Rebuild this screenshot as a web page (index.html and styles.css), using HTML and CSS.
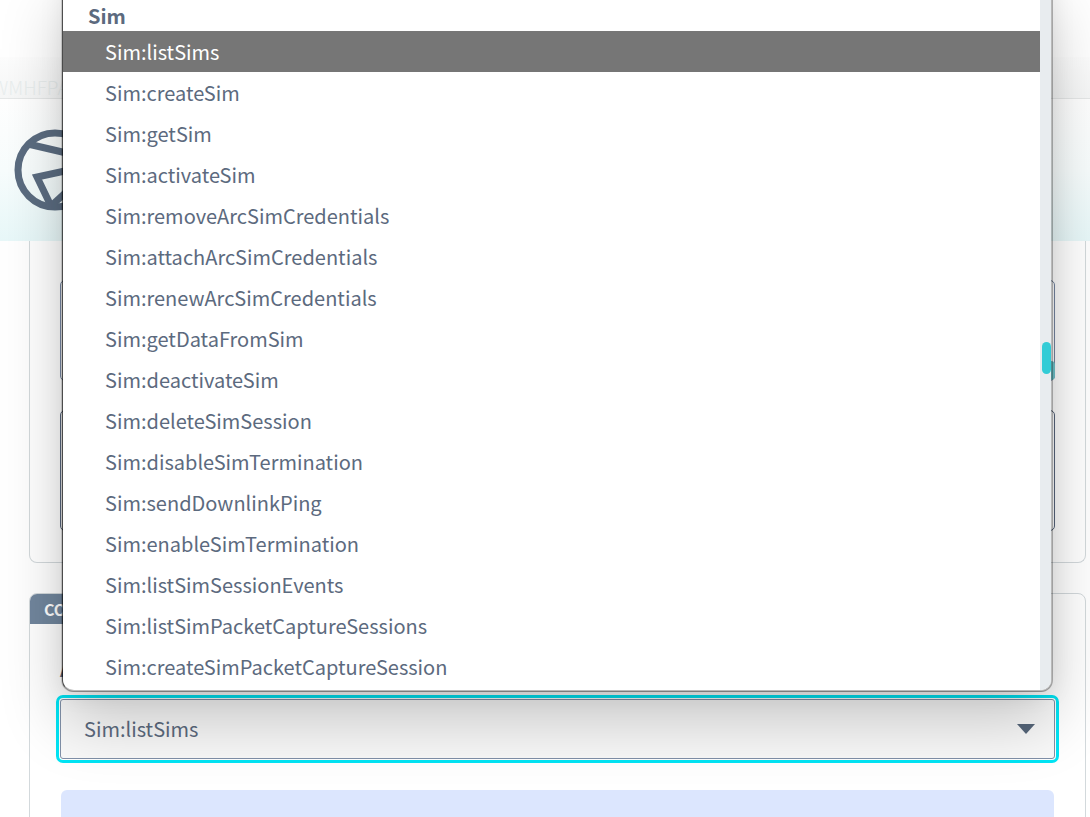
FILE: index.html
```html
<!DOCTYPE html>
<html lang="en">
<head>
    <meta charset="UTF-8">
    <meta name="viewport" content="width=device-width, initial-scale=1.0">
    <title>Sim:listSims</title>
    <link rel="stylesheet" href="styles.css">
</head>
<body>
    <div class="topbar">
        <div class="topbar-row">WMHFPA</div>
    </div>
    <header class="hero">
        <svg class="logo" viewBox="0 0 82 82" aria-hidden="true">
            <g fill="none" stroke="#5b6c80" stroke-width="7">
                <circle cx="41" cy="41" r="37"/>
                <path d="M14 15 L74 29"/>
                <path d="M74 37 L23 48 L37 77"/>
                <path d="M37 77 L62 54"/>
            </g>
        </svg>
    </header>
    <main>
        <section class="panel panel-first">
            <div class="text-wrap">
                <textarea class="field field-text" aria-label="Request"></textarea>
                <span class="grip"></span>
            </div>
            <div class="field field-box"></div>
        </section>

        <section class="panel">
            <h2 class="panel-tag">CODE</h2>
            <div class="panel-body">
                <label class="field-label" for="command">API</label>
                <div class="select-wrap">
                    <select id="command" class="select">
                        <option>Sim:listSims</option>
                    </select>
                    <svg class="caret" viewBox="0 0 18 10" aria-hidden="true"><path d="M0 0 H18 L9 10 Z" fill="#56667a"/></svg>
                    <div class="dropdown">
                        <div class="group-label" id="group-sim">Sim</div>
                        <ul class="options" role="listbox" aria-labelledby="group-sim">
                            <li class="option selected" role="option" aria-selected="true">Sim:listSims</li>
                            <li class="option" role="option">Sim:createSim</li>
                            <li class="option" role="option">Sim:getSim</li>
                            <li class="option" role="option">Sim:activateSim</li>
                            <li class="option" role="option">Sim:removeArcSimCredentials</li>
                            <li class="option" role="option">Sim:attachArcSimCredentials</li>
                            <li class="option" role="option">Sim:renewArcSimCredentials</li>
                            <li class="option" role="option">Sim:getDataFromSim</li>
                            <li class="option" role="option">Sim:deactivateSim</li>
                            <li class="option" role="option">Sim:deleteSimSession</li>
                            <li class="option" role="option">Sim:disableSimTermination</li>
                            <li class="option" role="option">Sim:sendDownlinkPing</li>
                            <li class="option" role="option">Sim:enableSimTermination</li>
                            <li class="option" role="option">Sim:listSimSessionEvents</li>
                            <li class="option" role="option">Sim:listSimPacketCaptureSessions</li>
                            <li class="option" role="option">Sim:createSimPacketCaptureSession</li>
                        </ul>
                        <div class="scroll-track"><div class="scroll-thumb"></div></div>
                    </div>
                </div>
                <div class="notice"></div>
            </div>
        </section>
    </main>
</body>
</html>
```

FILE: styles.css
```css
* {
    box-sizing: border-box;
}

html {
    overflow: hidden;
}

body {
    margin: 0;
    background: #fff;
    color: #5c6a7e;
    font-family: "Noto Sans CJK JP", "Noto Sans", sans-serif;
    font-size: 20px;
}

.topbar {
    padding-top: 57px;
    border-bottom: 1px solid #e6e8e8;
}

.topbar-row {
    height: 41px;
    margin-left: -8px;
    background: linear-gradient(#fdfdfd, #f6f7f7);
    color: #e9eeee;
    font-size: 19px;
    font-weight: 300;
    line-height: 60px;
    overflow: hidden;
}

.hero {
    height: 142px;
    padding: 30px 14px;
    background: linear-gradient(#fff, #f8fdfd 50%, #e8f8f9);
}

.logo {
    display: block;
    width: 82px;
    height: 82px;
}

main {
    padding: 0 4px 0 29px;
}

.panel {
    margin-bottom: 30px;
    border: 1px solid #d3d9dc;
    border-radius: 8px;
}

.panel-first {
    padding: 39px 30px 31px;
    border-top: 0;
    border-radius: 0 0 8px 8px;
}

.text-wrap {
    position: relative;
    margin-bottom: 29px;
}

.field {
    display: block;
    width: 100%;
    border: 1px solid #7485a0;
    border-radius: 5px;
    background: #fff;
}

.field-text {
    height: 101px;
    resize: none;
}

.grip {
    position: absolute;
    right: 0;
    bottom: 1px;
    width: 18px;
    height: 19px;
    border-radius: 4px;
    background: #6fc3ca;
}

.field-box {
    height: 121px;
    border-color: #56647a;
}

.panel-tag {
    width: 80px;
    margin: 0;
    padding-left: 14px;
    border-radius: 7px 0 0 0;
    background: #71869d;
    color: #fff;
    font-size: 16px;
    line-height: 30px;
}

.panel-body {
    padding: 30px;
}

.field-label {
    display: block;
    height: 45px;
    font-weight: bold;
    line-height: 30px;
}

.select-wrap {
    position: relative;
}

.select {
    display: block;
    width: 100%;
    height: 60px;
    padding: 0 60px 2px 23px;
    border: 1px solid #8090a8;
    border-radius: 3px;
    outline: 3px solid #00e5f5;
    outline-offset: 1px;
    appearance: none;
    background: #f9f9f9;
    color: inherit;
    font: inherit;
}

.caret {
    position: absolute;
    top: 25px;
    right: 20px;
    width: 18px;
    height: 10px;
}

/* Open list, sits above the select */
.dropdown {
    position: absolute;
    right: 2px;
    bottom: 67px;
    left: 2px;
    padding: 20px 11px 3px 0;
    border: 2px solid rgba(0, 0, 0, 0.28);
    border-left: 1px solid rgba(0, 0, 0, 0.6);
    border-radius: 0 0 12px 12px;
    background: #fff;
    background-clip: padding-box;
    box-shadow: -1px 0 0 rgba(0, 0, 0, 0.15),
                0 2px 24px rgba(0, 0, 0, 0.08),
                0 30px 64px rgba(0, 0, 0, 0.2);
    overflow: hidden;
}

.group-label {
    padding-left: 25px;
    font-weight: bold;
    line-height: 30px;
}

.options {
    margin: 0;
    padding: 0;
    list-style: none;
}

.option {
    padding-left: 42px;
    line-height: 41px;
}

.option.selected {
    background: #767676;
    color: #fff;
}

.scroll-track {
    position: absolute;
    top: 0;
    right: 0;
    bottom: 0;
    width: 11px;
    background: #e8ecef;
}

.scroll-thumb {
    position: absolute;
    right: 0;
    bottom: 316px;
    width: 9px;
    height: 32px;
    border-radius: 5px;
    background: #33ccd6;
}

.notice {
    height: 60px;
    margin: 31px 1px 0;
    border-radius: 6px;
    background: #dce6fe;
    position: relative;
}
```
